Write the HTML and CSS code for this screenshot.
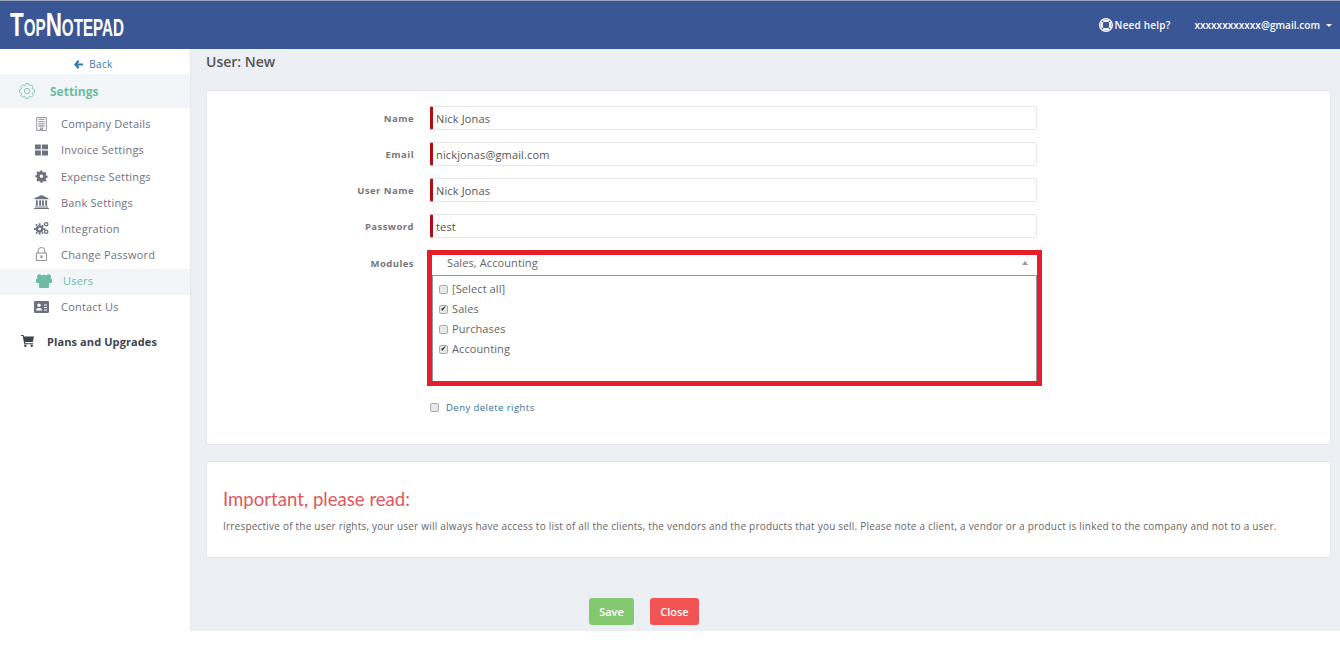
FILE: index.html
```html
<!DOCTYPE html>
<html lang="en">
<head>
<meta charset="utf-8">
<title>TopNotepad - User: New</title>
<link rel="stylesheet" href="styles.css">
</head>
<body>
<div class="page">
  <header class="topbar">
    <div class="logo"><span class="cap">T</span>OP<span class="cap">N</span>OTEPAD</div>
    <div class="top-right">
      <svg class="help-ic" viewBox="0 0 16 16"><circle cx="8" cy="8" r="5" fill="none" stroke="#fff" stroke-width="2.600"/><circle cx="8" cy="8" r="7.300" fill="none" stroke="#fff" stroke-width="1.400"/><path d="M3.500 3.500l1.800 1.800M12.500 3.500l-1.800 1.800M3.500 12.500l1.800-1.800M12.500 12.500l-1.800-1.800" stroke="#3b5695" stroke-width="1.200"/></svg>
      <span class="help">Need help?</span>
      <span class="email">xxxxxxxxxxxx@gmail.com</span>
      <span class="caret"></span>
    </div>
  </header>
  <div class="body-row">
    <aside class="sidebar">
      <a class="back"><svg class="back-ic" viewBox="0 0 10 10"><path d="M5.200 .8L1.500 5l3.700 4.200M1.800 5H10" fill="none" stroke="#337ab7" stroke-width="2.400"/></svg>Back</a>
      <div class="section">
        <svg class="gear" viewBox="0 0 18 18"><polygon fill="none" stroke="#6dbba3" stroke-width=".9" stroke-linejoin="round" points="6.740,2.800 7.520,.63 10.480,.63 11.260,2.800 11.790,3.020 13.880,2.040 15.960,4.120 14.980,6.210 15.200,6.740 17.370,7.520 17.370,10.480 15.200,11.260 14.980,11.790 15.960,13.880 13.880,15.960 11.790,14.980 11.260,15.200 10.480,17.370 7.520,17.370 6.740,15.200 6.210,14.980 4.120,15.960 2.040,13.880 3.020,11.790 2.800,11.260 .63,10.480 .63,7.520 2.800,6.740 3.020,6.210 2.040,4.120 4.120,2.040 6.210,3.020"/><circle cx="9" cy="9" r="3" fill="none" stroke="#6dbba3" stroke-width=".9"/></svg>
        <span>Settings</span>
      </div>
      <nav class="menu">
        <a class="item"><span class="ic"><svg viewBox="0 0 14 16"><path fill="none" stroke="#85868f" d="M1.500 .5h11v15h-11z"/><path fill="#a3a4ab" d="M3.500 2h7v1.500h-7zM3.500 4.500h7V6h-7zM3.500 7h7v1.500h-7zM3.500 9.500h7V11h-7zM5 12h4v3.500H5z"/></svg></span>Company Details</a>
        <a class="item"><span class="ic"><svg viewBox="0 0 14 12"><path fill="#70717f" d="M0 0h6.300v5.300H0zM7.500 0H14v5.300H7.500zM0 6.500h6.300V12H0zM7.500 6.500H14V12H7.500z"/></svg></span>Invoice Settings</a>
        <a class="item"><span class="ic"><svg viewBox="0 0 14 14"><path fill="#70717f" fill-rule="evenodd" d="M5.700 0h2.600l.4 2 1.400.6 1.700-1.100 1.800 1.800-1.100 1.700.6 1.400 1.900.4v2.600l-1.900.4-.6 1.400 1.100 1.700-1.800 1.800-1.700-1.100-1.400.6-.4 1.900H5.700l-.4-1.900-1.400-.6-1.700 1.100L.4 12.200l1.100-1.700-.6-1.400L-1 8.700V6.100l1.900-.4.6-1.400L.4 2.600 2.200.8l1.700 1.100 1.400-.6zM7 5a2.300 2.300 0 100 4.600A2.300 2.300 0 007 5z" transform="translate(1.200 1.200) scale(.82)"/></svg></span>Expense Settings</a>
        <a class="item"><span class="ic ic-wide"><svg viewBox="0 0 16 15"><path fill="#70717f" d="M8 0l7.500 3.500v1H.5v-1zM2 5.500h2v6H2zM5.500 5.500h2v6h-2zM8.500 5.500h2v6h-2zM12 5.500h2v6h-2zM1 12.200h14v1.200H1zM0 14h16v1H0z"/></svg></span>Bank Settings</a>
        <a class="item"><span class="ic ic-wide"><svg viewBox="0 0 16 14"><g fill="#70717f"><circle cx="6" cy="8" r="4"/><path d="M5 2h2v2H5zM5 12h2v2H5zM0 7h2v2H0zM10 7h2v2h-2zM1.500 3.500l1.500-1 1 1.500-1.500 1zM9 3.500l1.500 1-1 1.500L8 5zM1.500 12.500l1.500 1 1-1.500-1.500-1zM9 13.500l1.500-1-1-1.500L8 12z"/></g><circle cx="6" cy="8" r="1.500" fill="#fff"/><circle cx="13" cy="3" r="1.800" fill="none" stroke="#70717f" stroke-width="1.400"/><circle cx="13" cy="11" r="1.800" fill="none" stroke="#70717f" stroke-width="1.400"/></svg></span>Integration</a>
        <a class="item"><span class="ic"><svg viewBox="0 0 12 15"><path fill="none" stroke="#85868f" d="M.5 6.500h11v8H.5zM2.500 6.500V4a3.500 3.500 0 017 0v2.500"/><path fill="#85868f" d="M5 9h2v3H5z"/></svg></span>Change Password</a>
        <a class="item active"><span class="ic"><svg viewBox="0 0 16 14"><g fill="#6dbba3"><circle cx="3.500" cy="2.800" r="2.500"/><circle cx="12.500" cy="2.800" r="2.500"/><circle cx="8" cy="3.500" r="2.800"/><path d="M0 5.500Q.5 4 2.500 4h11q2 0 2.500 1.500V9h-3v4.200q0 .8-.8.800H3.800q-.8 0-.8-.8V9H0z"/></g></svg></span>Users</a>
        <a class="item"><span class="ic ic-wide"><svg viewBox="0 0 15 12"><path fill="#70717f" fill-rule="evenodd" d="M1 0h13a1 1 0 011 1v10a1 1 0 01-1 1H1a1 1 0 01-1-1V1a1 1 0 011-1zm4 2.500a1.800 1.800 0 100 3.600 1.800 1.800 0 000-3.600zM2 9.500h6C8 7.800 7 7 5 7S2 7.800 2 9.500zM10 3.500v1h3v-1zm0 2.500v1h3V6zm0 2.500v1h3v-1z"/></svg></span>Contact Us</a>
      </nav>
      <a class="plans"><svg class="cart" viewBox="0 0 13 12"><path fill="#3d4450" d="M0 0h2.500l.4 1.500H13l-1.200 5.500H4l.3 1.200H12v1H3.300L1.700 1H0z"/><circle cx="4.300" cy="10.800" r="1.200" fill="#3d4450"/><circle cx="10.700" cy="10.800" r="1.200" fill="#3d4450"/></svg>Plans and Upgrades</a>
    </aside>
    <main class="content">
      <h1 class="title">User: New</h1>
      <section class="card form-card">
        <div class="row"><label class="lbl">Name</label><div class="input">Nick Jonas</div></div>
        <div class="row"><label class="lbl">Email</label><div class="input">nickjonas@gmail.com</div></div>
        <div class="row"><label class="lbl">User Name</label><div class="input">Nick Jonas</div></div>
        <div class="row"><label class="lbl">Password</label><div class="input">test</div></div>
        <div class="row row-modules">
          <label class="lbl">Modules</label>
          <div class="highlight">
            <div class="select-head"><span>Sales, Accounting</span><span class="up"></span></div>
            <div class="select-list">
              <div class="opt"><span class="cb"></span>[Select all]</div>
              <div class="opt"><span class="cb on">&#10004;</span>Sales</div>
              <div class="opt"><span class="cb"></span>Purchases</div>
              <div class="opt"><span class="cb on">&#10004;</span>Accounting</div>
            </div>
          </div>
        </div>
        <div class="deny"><span class="cb cb-deny"></span><a>Deny delete rights</a></div>
      </section>
      <section class="card note">
        <h2>Important, please read:</h2>
        <p>Irrespective of the user rights, your user will always have access to list of all the clients, the vendors and the products that you sell. Please note a client, a vendor or a product is linked to the company and not to a user.</p>
      </section>
      <div class="actions">
        <button class="btn save">Save</button>
        <button class="btn close">Close</button>
      </div>
    </main>
  </div>
</div>
</body>
</html>
```

FILE: styles.css
```css
* { box-sizing: border-box; }
html, body { margin: 0; padding: 0; background: #fff; }
body { font-family: "Open Sans", "Noto Sans", sans-serif; font-size: 11px; color: #676a6c; overflow: hidden; }
.page { height: 631px; display: flex; flex-direction: column; }

.topbar { height: 49px; flex: none; background: #3b5695; border-top: 1px solid #9aa5bd; display: flex; align-items: center; justify-content: space-between; padding: 0 8px 0 10px; }
.logo { font-family: "Liberation Sans", sans-serif; font-weight: 700; color: #fff; font-size: 23px; line-height: 1; transform: scaleX(.66); transform-origin: left center; white-space: nowrap; margin-top: -3px; width: 100px; }
.logo .cap { font-size: 34px; }
.top-right { display: flex; align-items: center; color: #fff; font-size: 10px; font-weight: 600; }
.help-ic { width: 14px; height: 14px; margin-right: 2px; }
.help { font-size: 10px; letter-spacing: .2px; }
.email { margin-left: 24px; font-size: 10px; letter-spacing: .03px; }
.caret { margin-left: 6px; border: 3px solid transparent; border-top-color: #fff; border-bottom: 0; }

.body-row { flex: 1; display: flex; min-height: 0; }
.sidebar { width: 191px; flex: none; background: #fff; border-right: 1px solid #e3e6ea; }
.back { height: 25px; display: flex; align-items: center; justify-content: center; padding: 5px 3px 0 0; color: #3a77ad; font-size: 10px; letter-spacing: .3px; }
.back-ic { width: 9px; height: 9px; margin-right: 6px; }
.section { height: 34px; background: #f2f6f9; display: flex; align-items: center; padding-left: 19px; color: #6dbba3; font-size: 12px; font-weight: 700; }
.gear { width: 16px; height: 16px; margin-right: 15px; }
.menu { display: flex; flex-direction: column; padding-top: 4.250px; }
.item { height: 26.140px; display: flex; align-items: center; padding: 0 0 2.900px 35px; color: #70717f; font-size: 11px; letter-spacing: .2px; }
.ic { width: 13px; height: 14px; margin-right: 13px; display: flex; align-items: center; justify-content: center; flex: none; }
.ic svg { width: 100%; height: 100%; }
.ic-wide { width: 15px; margin-left: -1px; margin-right: 12px; }
.item.active { background: #f2f6f9; color: #6dbba3; }
.item.active .ic { width: 16px; margin-left: 1px; margin-right: 11px; }
.plans { display: flex; align-items: center; margin-top: 7px; height: 26px; padding-left: 21px; color: #3d4450; font-size: 11px; font-weight: 700; letter-spacing: .1px; }
.cart { width: 13px; height: 12px; margin-right: 13px; }

.content { flex: 1; min-width: 0; background: #eceff3; padding: 0 9px 0 15px; }
.title { margin: 0; height: 41px; padding-top: 4px; font-size: 14px; line-height: 18px; font-weight: 600; color: #555; }
.card { background: #fff; border: 1px solid #e3e6ea; border-radius: 3px; }
.form-card { height: 355px; padding: 15px 0 0; }
.row { display: flex; align-items: flex-start; height: 24px; margin-bottom: 12px; }
.lbl { width: 207px; flex: none; text-align: right; font-size: 9.500px; font-weight: 700; color: #777; line-height: 26px; letter-spacing: .45px; }
.input { margin-left: 16px; width: 607px; height: 24px; border: 1px solid #e6e7e9; border-left: 3px solid #b30e16; border-radius: 2px; font-size: 11px; line-height: 24px; padding-left: 3px; color: #555; letter-spacing: .15px; }
.row-modules { height: 136px; margin: 1px 0 0; }
.row-modules .lbl { line-height: 26px; padding-top: 1px; }
.highlight { margin-left: 13px; width: 615px; height: 136px; border: 5px solid #e41e2d; background: #fff; display: flex; flex-direction: column; }
.select-head { height: 21px; flex: none; display: flex; align-items: center; justify-content: space-between; padding: 0 9px 5px 15px; font-size: 11px; color: #666; border-bottom: 1px solid #7f9aa3; letter-spacing: .1px; }
.up { border: 3px solid transparent; border-bottom: 4px solid #999; border-top: 0; }
.select-list { flex: 1; border-left: 1px solid #8e9aa3; border-right: 1px solid #8e9aa3; padding: 2px 0 0 6px; }
.opt { display: flex; align-items: center; height: 20px; font-size: 11px; color: #666; letter-spacing: .1px; }
.cb { width: 9px; height: 9px; margin: 3px 4px 0 0; border: 1px solid #aaa; border-radius: 2px; background: #e8e8e8; flex: none; display: flex; align-items: center; justify-content: center; font-size: 7px; line-height: 1; color: #222; font-family: "DejaVu Sans", sans-serif; }
.deny { margin: 15px 0 0 223px; display: flex; align-items: center; font-size: 9.500px; color: #3a6d9a; letter-spacing: .45px; }
.cb-deny { margin: 0 7px 0 0; }

.note { height: 97px; margin-top: 16px; padding: 25px 16px 0; }
.note h2 { margin: 0; font-family: "Lato", sans-serif; font-size: 18.600px; line-height: 24px; font-weight: 400; color: #e0565a; }
.note p { margin: 9px 0 0; font-size: 10px; line-height: 13px; color: #666; white-space: nowrap; letter-spacing: .215px; }

.actions { display: flex; padding: 40px 0 0 383px; gap: 16px; }
.btn { height: 27px; border: 0; border-radius: 3px; color: #fff; font: 600 11px "Open Sans", sans-serif; padding: 0; }
.save { width: 45px; background: #84c86f; }
.close { width: 49px; background: #f25353; }
```
